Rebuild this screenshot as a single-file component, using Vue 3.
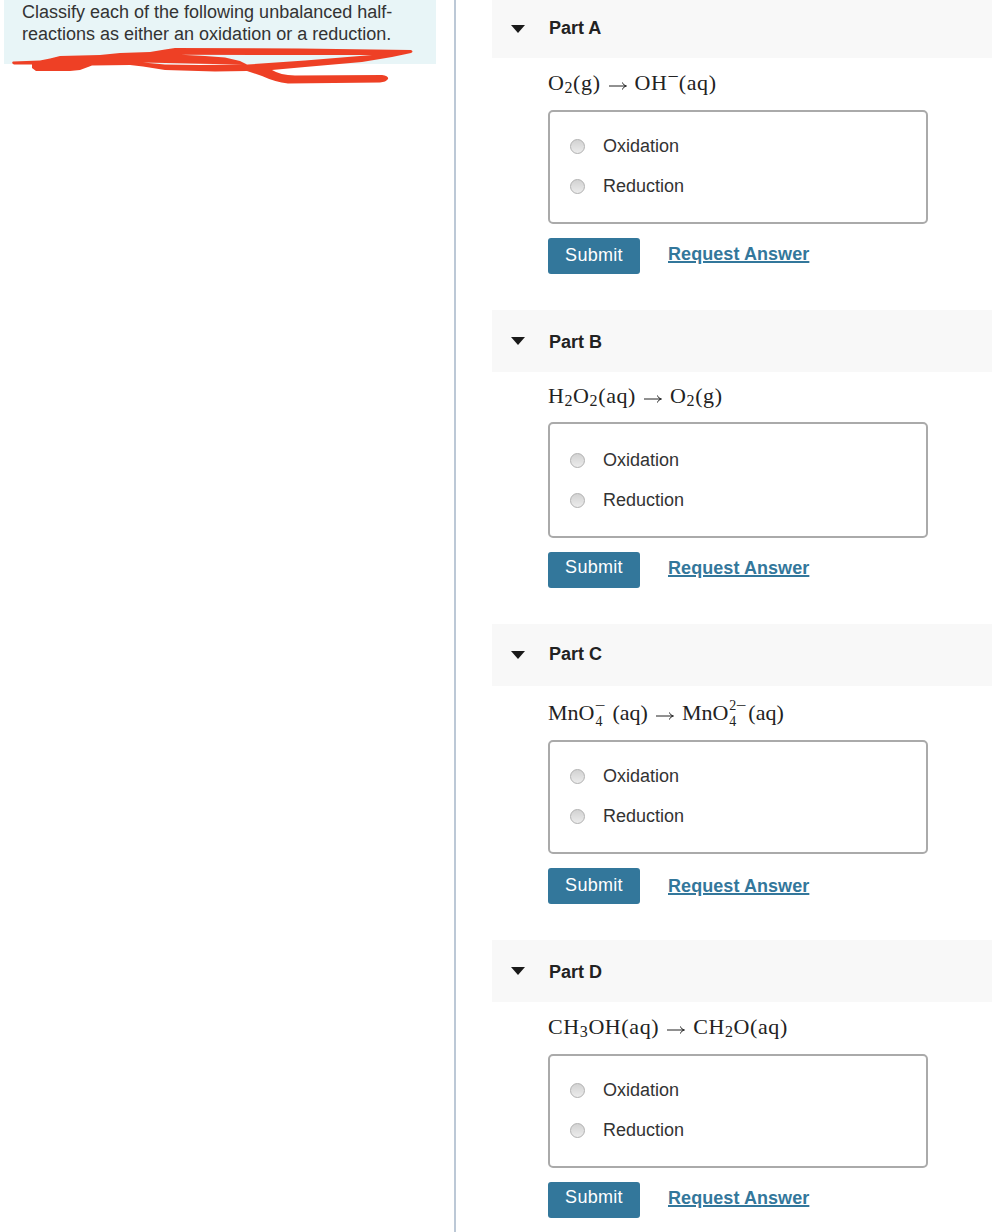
<script setup>
const parts = [
  { id: 'a', name: 'Part A' },
  { id: 'b', name: 'Part B' },
  { id: 'c', name: 'Part C' },
  { id: 'd', name: 'Part D' },
]
</script>

<template>
  <div class="page">
    <aside class="left">
      <div class="intro">
        Classify each of the following unbalanced half-<br />reactions as either an oxidation or a reduction.
      </div>
      <svg class="scribble" width="420" height="90" viewBox="0 0 420 90">
        <path fill="#ee4025" fill-rule="evenodd" d="M13 61.500 L40 60.500 L50 58.500 L60 56 L100 55 L120 53 L150 52 L165 49.500 L175 48 L300 48.500 L411 50 Q414 51.500 411 53 L392 57 L362 62 L305 67 L272 70 Q280 75 295 75.500 L382 75 Q389 76 388 79 Q386 82 380 82.500 L288 83.500 Q275 82 262 76 L247 71 L215 71.500 L165 70 L143 66.500 L130 65 L92 65.500 L80 70 L70 71 L36 71 L32 68 L32 64.500 L14 64.500 Q11 63 13 61.500 Z M181 54.800 L372 55 L305 60.500 L247 64.500 L240 61 L225 57.500 L205 56 Z M143 62.500 L200 63.800 L243 64.500 L200 65 L165 64.500 Z"/>
      </svg>
    </aside>
    <main class="right">
      <section v-for="p in parts" :key="p.id" class="part" :class="'part-' + p.id">
        <header class="head">
          <span class="caret"></span>
          <h2 class="title">{{ p.name }}</h2>
        </header>
        <div class="body">
          <div class="eq">
            <template v-if="p.id === 'a'">O<sub>2</sub>(g)<svg class="arrow" width="18" height="10" viewBox="0 0 18 10"><path d="M0 5H17M13.500 1.500C14 3.500 15.500 4.500 17.500 5C15.500 5.500 14 6.500 13.500 8.500" fill="none" stroke="#222" stroke-width="1"/></svg>OH<sup class="minus">−</sup>(aq)</template>
            <template v-else-if="p.id === 'b'">H<sub>2</sub>O<sub>2</sub>(aq)<svg class="arrow" width="18" height="10" viewBox="0 0 18 10"><path d="M0 5H17M13.500 1.500C14 3.500 15.500 4.500 17.500 5C15.500 5.500 14 6.500 13.500 8.500" fill="none" stroke="#222" stroke-width="1"/></svg>O<sub>2</sub>(g)</template>
            <template v-else-if="p.id === 'c'">MnO<span class="stack first"><span class="up"><span class="wide-minus">−</span></span><span class="down">4</span></span>(aq)<svg class="arrow" width="18" height="10" viewBox="0 0 18 10"><path d="M0 5H17M13.500 1.500C14 3.500 15.500 4.500 17.500 5C15.500 5.500 14 6.500 13.500 8.500" fill="none" stroke="#222" stroke-width="1"/></svg>MnO<span class="stack"><span class="up">2<span class="wide-minus">−</span></span><span class="down">4</span></span>(aq)</template>
            <template v-else>CH<sub>3</sub>OH(aq)<svg class="arrow" width="18" height="10" viewBox="0 0 18 10"><path d="M0 5H17M13.500 1.500C14 3.500 15.500 4.500 17.500 5C15.500 5.500 14 6.500 13.500 8.500" fill="none" stroke="#222" stroke-width="1"/></svg>CH<sub>2</sub>O(aq)</template>
          </div>
          <div class="options">
            <label class="opt"><span class="radio"></span><span>Oxidation</span></label>
            <label class="opt"><span class="radio"></span><span>Reduction</span></label>
          </div>
          <div class="actions">
            <button class="submit" type="button">Submit</button>
            <a class="answer">Request Answer</a>
          </div>
        </div>
      </section>
    </main>
  </div>
</template>

<style>
html, body { margin: 0; background: #fff; }
</style>

<style scoped>
.page {
  display: flex;
  width: 992px;
  height: 1232px;
  overflow: hidden;
  font-family: "Liberation Sans", Arial, sans-serif;
  color: #2b2b2b;
}
.left {
  position: relative;
  width: 454px;
  flex: none;
  box-sizing: border-box;
  padding-left: 4px;
}
.intro {
  width: 432px;
  height: 64px;
  box-sizing: border-box;
  padding: 1px 18px 0;
  background: #e8f5f7;
  font-size: 18px;
  line-height: 22px;
  color: #333;
}
.scribble { position: absolute; left: 0; top: 0; }
.right {
  flex: 1;
  border-left: 2px solid #bcc8d6;
  padding-left: 36px;
}
.part { margin-bottom: 36px; }
.head {
  display: flex;
  align-items: center;
  height: 62px;
  background: #f8f8f8;
}
.part-a .head { height: 58px; }
.caret {
  width: 0;
  height: 0;
  margin-left: 19px;
  border-left: 7px solid transparent;
  border-right: 7px solid transparent;
  border-top: 8px solid #1a1a1a;
}
.title {
  margin: 0 0 0 24px;
  font-size: 18px;
  font-weight: 700;
  color: #222;
}
.part-a .title, .part-c .title { padding-bottom: 2px; }
.part-b .title, .part-d .title { padding-top: 2px; }
.body { padding-left: 56px; }
.eq {
  height: 52px;
  padding-top: 11px;
  box-sizing: border-box;
  font-family: "Liberation Serif", serif;
  font-size: 22px;
  letter-spacing: .6px;
  line-height: 28px;
  color: #222;
  white-space: nowrap;
}
.part-b .eq { height: 50px; padding-top: 10px; }
.part-c .eq { height: 54px; padding-top: 13px; letter-spacing: 0; }
sub, sup { font-size: 16px; line-height: 0; }
sub { vertical-align: -3px; }
sup { vertical-align: 7px; }
.arrow { margin: 0 8px; vertical-align: -1px; }
.minus { font-size: 20px; letter-spacing: 0; }
.stack {
  display: inline-block;
  position: relative;
  width: 20px;
  height: 1em;
  font-size: 14px;
  line-height: 1;
}
.stack.first { width: 18px; }
.up { position: absolute; left: 1px; top: -7px; white-space: nowrap; }
.down { position: absolute; left: 1px; top: 9px; }
.wide-minus {
  display: inline-block;
  transform: scaleX(1.35);
  transform-origin: left center;
}
.options {
  box-sizing: border-box;
  width: 380px;
  height: 114px;
  padding: 19px 0 0 20px;
  border: 2px solid #aaa;
  border-radius: 5px;
  display: flex;
  flex-direction: column;
  gap: 10px;
}
.part-b .options { height: 116px; padding-top: 21px; }
.opt {
  display: flex;
  align-items: center;
  height: 30px;
  font-size: 18px;
  color: #333;
}
.radio {
  box-sizing: border-box;
  width: 15px;
  height: 15px;
  border-radius: 50%;
  margin-right: 18px;
  background: linear-gradient(#d2d2d2, #ececec);
  border: 1px solid #b0b0b0;
}
.actions {
  display: flex;
  align-items: center;
  margin-top: 14px;
  height: 36px;
}
.submit {
  width: 92px;
  height: 36px;
  padding: 0 0 2px;
  border: 0;
  border-radius: 3px;
  background: #33779b;
  color: #fff;
  font: 18px "Liberation Sans", Arial, sans-serif;
  letter-spacing: .3px;
}
.part-b .submit, .part-d .submit { padding-bottom: 6px; }
.answer {
  margin-left: 28px;
  padding-bottom: 4px;
  font-size: 18px;
  font-weight: 700;
  letter-spacing: .07px;
  color: #33779b;
  text-decoration: underline;
  text-decoration-thickness: 2px;
}
.part-c .answer { padding-bottom: 0; }
</style>
